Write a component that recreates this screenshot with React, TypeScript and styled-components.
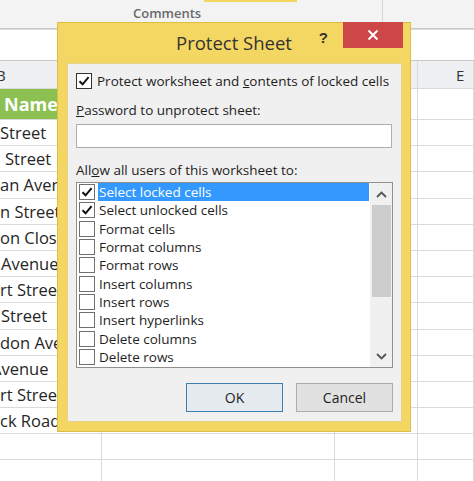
import styled, { createGlobalStyle } from 'styled-components';

const GlobalStyle = createGlobalStyle`
    html, body {
        margin: 0;
        padding: 0;
        background: #fff;
        overflow: hidden;
    }
    body {
        font-family: "Open Sans", "Noto Sans", sans-serif;
        color: #222;
    }
`;

const Page = styled.div`
    position: relative;
    width: 474px;
    height: 481px;
    overflow: hidden;
    background: #fff;
`;

const Ribbon = styled.div`
    height: 28px;
    background: #f3f3f3;
    border-bottom: 1px solid #c9c9c9;
    display: flex;
`;

const RibbonGroup = styled.div`
    width: 382px;
    height: 24px;
    border-right: 1px solid #d6d6d6;
    display: flex;
    flex-direction: column;
`;

const RibbonHighlight = styled.div`
    width: 93px;
    height: 2px;
    margin-left: 204px;
    background: #f2d660;
`;

const GroupLabel = styled.span`
    margin: 2px 0 0 133px;
    font-size: 13px;
    font-weight: 600;
    color: #6a6a6a;
    line-height: 18px;
`;

const FormulaArea = styled.div`
    height: 30px;
    border-top: 1px solid #dcdcdc;
    border-bottom: 1px solid #c6c6c6;
    background: #fff;
`;

const SheetRow = styled.div<{ $height: number; $header?: boolean }>`
    display: grid;
    grid-template-columns: 102px 233px 83px 1fr;
    height: ${p => p.$height}px;
    box-sizing: border-box;
    border-bottom: 1px solid #dadada;
    background: ${p => (p.$header ? '#eef0f2' : '#fff')};
`;

const Cell = styled.div<{ $fill?: string; $indent?: number }>`
    display: flex;
    align-items: center;
    border-right: 1px solid #dadada;
    background: ${p => p.$fill ?? 'transparent'};
    white-space: nowrap;
    overflow: visible;
    font-size: 16.5px;
    color: #262626;
    padding-left: ${p => Math.max(p.$indent ?? 0, 0)}px;
    margin-left: ${p => Math.min(p.$indent ?? 0, 0)}px;
`;

const HeaderLabel = styled.span`
    font-size: 15px;
    color: #333;
`;

const NameLabel = styled.span`
    font-size: 18px;
    font-weight: 700;
    color: #fff;
`;

const Dialog = styled.div`
    position: absolute;
    left: 57px;
    top: 22px;
    width: 354px;
    height: 410px;
    box-sizing: border-box;
    background: #f3d762;
    border: 1px solid #dcbd45;
    display: flex;
    flex-direction: column;
`;

const TitleBar = styled.div`
    height: 39px;
    display: grid;
    grid-template-columns: 1fr auto auto;
    grid-template-rows: 39px;
`;

const Title = styled.div`
    grid-column: 1 / -1;
    grid-row: 1;
    text-align: center;
    font-size: 18.5px;
    line-height: 39px;
    color: #333;
`;

const HelpButton = styled.div`
    grid-column: 2;
    grid-row: 1;
    font-family: "Liberation Sans", Arial, sans-serif;
    font-weight: 700;
    font-size: 15px;
    color: #333;
    margin: 6px 15px 0 0;
`;

const CloseButton = styled.div`
    grid-column: 3;
    grid-row: 1;
    width: 60px;
    height: 26px;
    margin: -1px 7px 0 0;
    background: #cd4749;
    display: flex;
    align-items: center;
    justify-content: center;
`;

const Client = styled.div`
    flex: 1;
    margin: 1px 8px 9px 9px;
    padding: 8px 10px 0 8px;
    background: #f0f0f0;
    border: 1px solid #e6d28a;
    display: flex;
    flex-direction: column;
    font-size: 13.5px;
    color: #1e1e1e;
`;

const CheckRow = styled.label`
    display: flex;
    align-items: center;
    gap: 5px;
    height: 18px;
    white-space: nowrap;
`;

const Box = styled.span<{ $dark?: boolean }>`
    width: 16px;
    height: 16px;
    box-sizing: border-box;
    flex: none;
    border: 1px solid ${p => (p.$dark ? '#333' : '#707070')};
    background: #fff;
    display: flex;
    align-items: center;
    justify-content: center;
`;

const FieldLabel = styled.div<{ $top: number }>`
    margin-top: ${p => p.$top}px;
    height: 18px;
    line-height: 18px;
    white-space: nowrap;
`;

const PasswordInput = styled.div`
    margin-top: 5px;
    width: 316px;
    height: 24px;
    box-sizing: border-box;
    border: 1px solid #abadb3;
    background: #fff;
`;

const ListBox = styled.div`
    margin-top: 3px;
    width: 317px;
    height: 186px;
    box-sizing: border-box;
    border: 1px solid #8f8f8f;
    background: #fff;
    display: flex;
`;

const Items = styled.div`
    flex: 1;
    padding: 0 0 0 2px;
`;

const Item = styled.div`
    display: flex;
    align-items: center;
    height: 18.3px;
    gap: 3px;
    white-space: nowrap;
`;

const ItemText = styled.span<{ $selected?: boolean }>`
    flex: 1;
    height: 18px;
    line-height: 18px;
    padding-left: 1px;
    background: ${p => (p.$selected ? '#3399ff' : 'transparent')};
    color: ${p => (p.$selected ? '#fff' : '#1e1e1e')};
`;

const ScrollBar = styled.div`
    width: 22px;
    margin-left: 1px;
    background: #f0f0f0;
    display: flex;
    flex-direction: column;
    align-items: center;
`;

const ScrollArrow = styled.div`
    height: 22px;
    display: flex;
    align-items: center;
    justify-content: center;
`;

const ScrollThumb = styled.div`
    width: 19px;
    height: 92px;
    background: #cdcdcd;
`;

const ScrollGap = styled.div`
    flex: 1;
`;

const ButtonRow = styled.div`
    margin-top: 15px;
    display: flex;
    justify-content: flex-end;
    gap: 13px;
    width: 317px;
`;

const Button = styled.div<{ $default?: boolean }>`
    width: 97px;
    height: 29px;
    box-sizing: border-box;
    border: 1px solid ${p => (p.$default ? '#3c7fb1' : '#adadad')};
    background: ${p => (p.$default ? '#e5eaee' : '#e1e1e1')};
    display: flex;
    align-items: center;
    justify-content: center;
    font-size: 14px;
    color: #1e1e1e;
`;

const Check = () => (
    <svg width="12" height="12" viewBox="0 0 12 12">
        <path d="M1.5 6.2 L4.6 9.3 L10.6 2.2" fill="none" stroke="#111" strokeWidth="2" />
    </svg>
);

const Chevron = ({ up }: { up?: boolean }) => (
    <svg width="11" height="7" viewBox="0 0 11 7">
        <path
            d={up ? 'M1 6 L5.5 1.5 L10 6' : 'M1 1 L5.5 5.5 L10 1'}
            fill="none"
            stroke="#555"
            strokeWidth="1.8"
        />
    </svg>
);

const streets = [
    { text: 'Street', indent: 0 },
    { text: 'Street', indent: 5 },
    { text: 'an Avenue', indent: 0 },
    { text: 'n Street', indent: 0 },
    { text: 'on Close', indent: 0 },
    { text: 'Avenue', indent: 1 },
    { text: 'rt Street', indent: 0 },
    { text: 'Street', indent: 1 },
    { text: 'don Avenue', indent: 0 },
    { text: 'Avenue', indent: -9 },
    { text: 'rt Street', indent: 0 },
    { text: 'ck Road', indent: 0 },
    { text: '', indent: 0 },
    { text: '', indent: 0 },
];

const permissions = [
    { label: 'Select locked cells', checked: true },
    { label: 'Select unlocked cells', checked: true },
    { label: 'Format cells', checked: false },
    { label: 'Format columns', checked: false },
    { label: 'Format rows', checked: false },
    { label: 'Insert columns', checked: false },
    { label: 'Insert rows', checked: false },
    { label: 'Insert hyperlinks', checked: false },
    { label: 'Delete columns', checked: false },
    { label: 'Delete rows', checked: false },
];

export default function App() {
    return (
        <Page>
            <GlobalStyle />
            <Ribbon>
                <RibbonGroup>
                    <RibbonHighlight />
                    <GroupLabel>Comments</GroupLabel>
                </RibbonGroup>
            </Ribbon>
            <FormulaArea />
            <SheetRow $height={28} $header>
                <Cell $indent={-4}><HeaderLabel>B</HeaderLabel></Cell>
                <Cell />
                <Cell />
                <Cell $indent={38}><HeaderLabel>E</HeaderLabel></Cell>
            </SheetRow>
            <SheetRow $height={31}>
                <Cell $fill="#8cc152" $indent={4}><NameLabel>Name</NameLabel></Cell>
                <Cell />
                <Cell />
                <Cell />
            </SheetRow>
            {streets.map((s, i) => (
                <SheetRow key={i} $height={26.2}>
                    <Cell $indent={s.indent}>{s.text}</Cell>
                    <Cell />
                    <Cell />
                    <Cell />
                </SheetRow>
            ))}

            <Dialog>
                <TitleBar>
                    <Title>Protect Sheet</Title>
                    <HelpButton>?</HelpButton>
                    <CloseButton>
                        <svg width="12" height="12" viewBox="0 0 12 12">
                            <path d="M1.5 1.5 L10.5 10.5 M10.5 1.5 L1.5 10.5" stroke="#fff" strokeWidth="2" />
                        </svg>
                    </CloseButton>
                </TitleBar>
                <Client>
                    <CheckRow>
                        <Box $dark><Check /></Box>
                        <span>Protect worksheet and <u>c</u>ontents of locked cells</span>
                    </CheckRow>
                    <FieldLabel $top={11}><u>P</u>assword to unprotect sheet:</FieldLabel>
                    <PasswordInput />
                    <FieldLabel $top={13}>All<u>o</u>w all users of this worksheet to:</FieldLabel>
                    <ListBox>
                        <Items>
                            {permissions.map((p, i) => (
                                <Item key={p.label}>
                                    <Box>{p.checked && <Check />}</Box>
                                    <ItemText $selected={i === 0}>{p.label}</ItemText>
                                </Item>
                            ))}
                        </Items>
                        <ScrollBar>
                            <ScrollArrow><Chevron up /></ScrollArrow>
                            <ScrollThumb />
                            <ScrollGap />
                            <ScrollArrow><Chevron /></ScrollArrow>
                        </ScrollBar>
                    </ListBox>
                    <ButtonRow>
                        <Button $default>OK</Button>
                        <Button>Cancel</Button>
                    </ButtonRow>
                </Client>
            </Dialog>
        </Page>
    );
}
